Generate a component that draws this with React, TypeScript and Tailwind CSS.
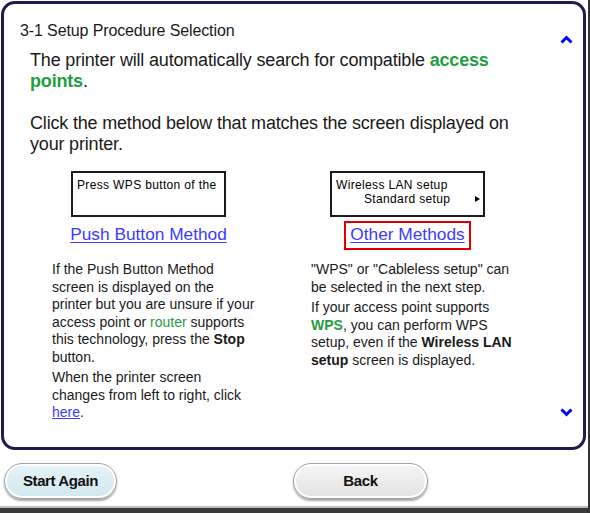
import React from "react";

const F = "font-['Liberation_Sans',Arial,sans-serif]";

function Chevron({ up }: { up?: boolean }) {
  return (
    <svg width="13" height="9" viewBox="0 0 13 9">
      <polyline
        points={up ? "1.5,7.5 6.5,2.5 11.5,7.5" : "1.5,1.5 6.5,6.5 11.5,1.5"}
        fill="none"
        stroke="#0000ff"
        strokeWidth="3"
      />
    </svg>
  );
}

export default function App() {
  return (
    <div className={`${F} w-[590px] h-[513px] bg-white flex flex-col border-r-2 border-[#333333] text-[#1a1a1a]`}>
      <div className="relative mt-[1px] ml-[1px] w-[585px] h-[449px] shrink-0 border-[3px] border-[#221a4e] rounded-[14px]">
        <div className="absolute left-[556px] top-[31px]">
          <Chevron up />
        </div>
        <div className="absolute left-[556px] top-[404px]">
          <Chevron />
        </div>

        <div className="pt-[18px] pl-[16px] text-[16px] leading-[18px] tracking-[-0.12px]">
          3-1 Setup Procedure Selection
        </div>

        <div className="mt-[10px] pl-[26px] text-[18px] leading-[21px] tracking-[-0.18px]">
          The printer will automatically search for compatible{" "}
          <b className="text-[#1f9e3f]">access</b>
          <br />
          <b className="text-[#1f9e3f]">points</b>.
          <br />
          <br />
          Click the method below that matches the screen displayed on
          <br />
          your printer.
        </div>

        <div className="mt-[16px] pl-[48px] flex">
          {/* left column */}
          <div className="w-[259px] shrink-0">
            <div className="ml-[19px] w-[155px] flex flex-col items-center">
              <div className="w-[155px] h-[46px] border-2 border-[#1a1a1a] pt-[5px] pl-[4px] text-[12px] leading-[14px] tracking-[0.35px] text-black">
                Press WPS button of the
              </div>
              <div className="mt-[4px] h-[29px] border-2 border-transparent px-[3px] pb-[6px] whitespace-nowrap">
                <span className="text-[17.3px] leading-[19px] text-[#3b3bff] underline underline-offset-[2px]">
                  Push Button Method
                </span>
              </div>
            </div>
            <div className="mt-[11px] text-[14px] leading-[17.5px]">
              <p>
                If the Push Button Method
                <br />
                screen is displayed on the
                <br />
                printer but you are unsure if your
                <br />
                access point or <span className="text-[#1f9e3f]">router</span> supports
                <br />
                this technology, press the <b>Stop</b>
                <br />
                button.
              </p>
              <p className="mt-[3px]">
                When the printer screen
                <br />
                changes from left to right, click
                <br />
                <span className="text-[#3b3bff] underline">here</span>.
              </p>
            </div>
          </div>

          {/* right column */}
          <div className="w-[259px] shrink-0">
            <div className="ml-[19px] w-[155px] flex flex-col items-center">
              <div className="w-[155px] h-[46px] border-2 border-[#1a1a1a] pt-[5px] pl-[4px] pr-[3px] text-[12px] leading-[14px] tracking-[0.35px] text-black">
                <div>Wireless LAN setup</div>
                <div className="flex items-center">
                  <span className="ml-[28px]">Standard setup</span>
                  <svg className="ml-auto" width="5" height="6" viewBox="0 0 5 6">
                    <polygon points="0,0 5,3 0,6" fill="#000" />
                  </svg>
                </div>
              </div>
              <div className="mt-[4px] h-[29px] border-2 border-[#e00000] px-[4px] pb-[6px] whitespace-nowrap">
                <span className="text-[17.3px] leading-[19px] text-[#3b3bff] underline underline-offset-[2px]">
                  Other Methods
                </span>
              </div>
            </div>
            <div className="mt-[11px] text-[14px] leading-[17.5px]">
              <p>
                "WPS" or "Cableless setup" can
                <br />
                be selected in the next step.
              </p>
              <p className="mt-[3px]">
                If your access point supports
                <br />
                <b className="text-[#1f9e3f]">WPS</b>, you can perform WPS
                <br />
                setup, even if the <b>Wireless LAN</b>
                <br />
                <b>setup</b> screen is displayed.
              </p>
            </div>
          </div>
        </div>
      </div>

      <div className="mt-[13px] flex">
        <div className="ml-[4px] w-[113px] h-[36px] rounded-full border border-[#a0a0a0] bg-gradient-to-b from-[#e6f4f8] to-[#d0e8ee] shadow-[inset_0_0_0_2px_#ffffff,0_2px_2px_rgba(0,0,0,0.35)] flex items-center justify-center text-[15px] font-bold tracking-[-0.4px] text-[#111]">
          Start Again
        </div>
        <div className="ml-[176px] w-[135px] h-[36px] rounded-full border border-[#a0a0a0] bg-gradient-to-b from-[#f6f6f6] to-[#e2e2e2] shadow-[inset_0_0_0_2px_#ffffff,0_2px_2px_rgba(0,0,0,0.35)] flex items-center justify-center text-[15px] font-bold tracking-[-0.3px] text-[#111]">
          Back
        </div>
      </div>

      <div className="mt-auto h-[2px] bg-[#bdbdbd]" />
      <div className="h-[5px] bg-[#3a3a3a]" />
    </div>
  );
}
